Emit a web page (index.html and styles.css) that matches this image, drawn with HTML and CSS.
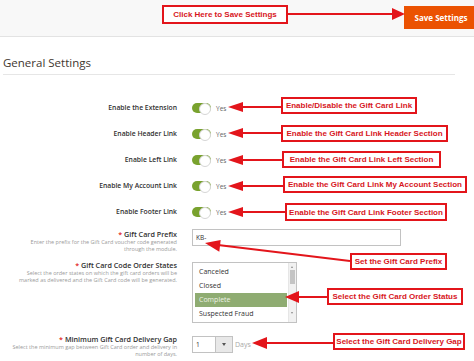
FILE: index.html
```html
<!DOCTYPE html>
<html lang="en">
<head>
    <meta charset="UTF-8">
    <meta name="viewport" content="width=device-width, initial-scale=1.0">
    <title>Gift Card Configuration</title>
    <link rel="stylesheet" href="styles.css">
</head>
<body>
    <header class="page_actions">
        <button class="save_btn">Save Settings</button>
    </header>

    <main class="config">
        <h2 class="section_title">General Settings</h2>

        <div class="field_list">
            <div class="field field_toggle">
                <div class="field_label">Enable the Extension</div>
                <div class="field_control"><span class="toggle"></span><span class="toggle_text">Yes</span></div>
            </div>
            <div class="field field_toggle">
                <div class="field_label">Enable Header Link</div>
                <div class="field_control"><span class="toggle"></span><span class="toggle_text">Yes</span></div>
            </div>
            <div class="field field_toggle">
                <div class="field_label">Enable Left Link</div>
                <div class="field_control"><span class="toggle"></span><span class="toggle_text">Yes</span></div>
            </div>
            <div class="field field_toggle">
                <div class="field_label">Enable My Account Link</div>
                <div class="field_control"><span class="toggle"></span><span class="toggle_text">Yes</span></div>
            </div>
            <div class="field field_toggle">
                <div class="field_label">Enable Footer Link</div>
                <div class="field_control"><span class="toggle"></span><span class="toggle_text">Yes</span></div>
            </div>

            <!-- Text / select fields -->
            <div class="field field_prefix">
                <div class="field_label">
                    <span class="required">*</span> Gift Card Prefix
                    <p class="field_note">Enter the prefix for the Gift Card voucher code generated<br>through the module.</p>
                </div>
                <div class="field_control">
                    <input type="text" class="text_input" value="KB-">
                </div>
            </div>

            <div class="field field_states">
                <div class="field_label">
                    <span class="required">*</span> Gift Card Code Order States
                    <p class="field_note">Select the order states on which the gift card orders will be<br>marked as delivered and the Gift Card code will be generated.</p>
                </div>
                <div class="field_control">
                    <div class="listbox">
                        <div class="listbox_options">
                            <div class="listbox_option">Canceled</div>
                            <div class="listbox_option">Closed</div>
                            <div class="listbox_option selected">Complete</div>
                            <div class="listbox_option">Suspected Fraud</div>
                        </div>
                        <div class="listbox_scroll">
                            <span class="scroll_up"></span>
                            <span class="scroll_thumb"></span>
                            <span class="scroll_down"></span>
                        </div>
                    </div>
                </div>
            </div>

            <div class="field field_gap">
                <div class="field_label">
                    <span class="required">*</span> Minimum Gift Card Delivery Gap
                    <p class="field_note">Select the minimum gap between Gift Card order and delivery in<br>number of days.</p>
                </div>
                <div class="field_control">
                    <div class="gap_select">
                        <span class="gap_value">1</span>
                        <span class="gap_arrow"></span>
                    </div>
                    <span class="gap_unit">Days</span>
                </div>
            </div>
        </div>
    </main>

    <!-- Screenshot annotations drawn over the form -->
    <div class="notes">
        <svg class="notes_arrows" width="474" height="361" viewBox="0 0 474 361">
            <g fill="#e3151b" stroke="#e3151b" stroke-width="2">
                <line x1="287" y1="14" x2="393" y2="14"/>
                <polygon stroke="none" points="392,8 405,14 392,20"/>

                <line x1="242" y1="107" x2="282" y2="107"/>
                <polygon stroke="none" points="243,102 228,107 243,112"/>
                <line x1="242" y1="133" x2="282" y2="133"/>
                <polygon stroke="none" points="243,128 228,133 243,138"/>
                <line x1="242" y1="160" x2="283" y2="160"/>
                <polygon stroke="none" points="243,155 228,160 243,165"/>
                <line x1="242" y1="186" x2="284" y2="186"/>
                <polygon stroke="none" points="243,181 228,186 243,191"/>
                <line x1="242" y1="212" x2="285" y2="212"/>
                <polygon stroke="none" points="243,207 228,212 243,217"/>

                <line x1="218" y1="245" x2="350" y2="261"/>
                <polygon stroke="none" points="205,243 220.7,239.9 219.3,251.8"/>

                <line x1="298" y1="297" x2="327" y2="297"/>
                <polygon stroke="none" points="299,291 285,297 299,303"/>

                <line x1="266" y1="343" x2="334" y2="343"/>
                <polygon stroke="none" points="267,337 252,343 267,349"/>
            </g>
        </svg>
        <div class="note_box note_save">Click Here to Save Settings</div>
        <div class="note_box note_ext">Enable/Disable the Gift Card Link</div>
        <div class="note_box note_header">Enable the Gift Card Link Header Section</div>
        <div class="note_box note_left">Enable the Gift Card Link Left Section</div>
        <div class="note_box note_account">Enable the Gift Card Link My Account Section</div>
        <div class="note_box note_footer">Enable the Gift Card Link Footer Section</div>
        <div class="note_box note_prefix">Set the Gift Card Prefix</div>
        <div class="note_box note_status">Select the Gift Card Order Status</div>
        <div class="note_box note_gap">Select the Gift Card Delivery Gap</div>
    </div>
</body>
</html>
```

FILE: styles.css
```css
* {
    margin: 0;
    padding: 0;
    box-sizing: border-box;
}

body {
    position: relative;
    width: 474px;
    height: 361px;
    overflow: hidden;
    background: #fff;
    font-family: "Open Sans", sans-serif;
    color: #303030;
}

/* Top action bar */
.page_actions {
    height: 37px;
    background: #f8f8f8;
    border-bottom: 1px solid #e3e3e3;
    display: flex;
    justify-content: flex-end;
    align-items: flex-start;
    padding-top: 6px;
}

.save_btn {
    width: 70px;
    height: 23px;
    border: none;
    background: #eb5202;
    color: #fff;
    font-family: "Open Sans", sans-serif;
    font-size: 8px;
    font-weight: 700;
    padding-left: 4px;
}

/* Section */
.config {
    padding: 0 19px 0 3px;
}

.section_title {
    margin-top: 18px;
    font-size: 11.5px;
    line-height: 15px;
    font-weight: 400;
    color: #41362f;
    padding-bottom: 4px;
    border-bottom: 1px solid #e6e6e6;
}

.field_list {
    margin-top: 20px;
    margin-left: -3px;
}

.field {
    display: grid;
    grid-template-columns: 177px 1fr;
    column-gap: 15px;
    align-items: start;
}

.field_toggle {
    height: 26px;
    align-items: center;
}

.field_label {
    text-align: right;
    font-size: 7.2px;
    font-weight: 600;
    line-height: 10px;
}

.field_toggle .field_label {
    font-size: 6.8px;
}

.required {
    color: #e22626;
}

.field_note {
    font-size: 5.5px;
    line-height: 7px;
    font-weight: 400;
    color: #9a9a9a;
}

.field_control {
    display: flex;
    align-items: center;
}

/* Toggle switch */
.toggle {
    position: relative;
    width: 19px;
    height: 10px;
    border-radius: 5px;
    background: #79a22e;
}

.toggle::after {
    content: "";
    position: absolute;
    right: 0;
    top: 0;
    width: 10px;
    height: 10px;
    border-radius: 50%;
    background: #fff;
    border: 1px solid #d6d6d6;
}

.toggle_text {
    margin-left: 5px;
    font-size: 6.5px;
    color: #666;
}

/* Text input */
.field_prefix {
    margin-top: 4px;
}

.text_input {
    width: 209px;
    height: 17px;
    border: 1px solid #c2c2c2;
    padding: 0 3px;
    font-family: "Open Sans", sans-serif;
    font-size: 6.5px;
    color: #303030;
    outline: none;
}

/* Multi select list */
.field_states {
    margin-top: 7px;
}

.field_states .field_control {
    padding-top: 2px;
}

.listbox {
    width: 105px;
    height: 61px;
    border: 1px solid #c2c2c2;
    display: flex;
}

.listbox_options {
    flex: 1;
    padding: 2px 1px 0 2px;
}

.listbox_option {
    height: 14px;
    line-height: 14px;
    padding-left: 4px;
    font-size: 7px;
    color: #333;
}

.listbox_option.selected {
    background: #8fac72;
    color: #eef3e8;
}

.listbox_scroll {
    position: relative;
    width: 8px;
    background: #f1f1f1;
    border-left: 1px solid #e6e6e6;
}

.scroll_up,
.scroll_down {
    position: absolute;
    left: 2px;
    width: 0;
    height: 0;
    border-left: 1.5px solid transparent;
    border-right: 1.5px solid transparent;
}

.scroll_up {
    top: 3px;
    border-bottom: 2px solid #8a8a8a;
}

.scroll_down {
    bottom: 8px;
    border-top: 2px solid #8a8a8a;
}

.scroll_thumb {
    position: absolute;
    left: 1px;
    top: 7px;
    width: 5px;
    height: 14px;
    background: #c4c4c4;
}

/* Delivery gap select */
.field_gap {
    margin-top: 11px;
}

.field_gap .field_control {
    padding-top: 2px;
}

.gap_select {
    display: flex;
    width: 41px;
    height: 17px;
    border: 1px solid #c2c2c2;
}

.gap_value {
    flex: 1;
    padding-left: 3px;
    font-size: 6.5px;
    line-height: 15px;
    color: #303030;
}

.gap_arrow {
    position: relative;
    width: 17px;
    background: #e8e8e8;
    border-left: 1px solid #c2c2c2;
}

.gap_arrow::after {
    content: "";
    position: absolute;
    left: 6px;
    top: 6px;
    border-left: 2px solid transparent;
    border-right: 2px solid transparent;
    border-top: 3px solid #555;
}

.gap_unit {
    margin-left: 2px;
    font-size: 7px;
    color: #a8a8a8;
}

/* Annotations */
.notes {
    position: absolute;
    left: 0;
    top: 0;
    width: 474px;
    height: 361px;
    pointer-events: none;
}

.notes_arrows {
    position: absolute;
    left: 0;
    top: 0;
}

.note_box {
    position: absolute;
    display: flex;
    align-items: center;
    justify-content: center;
    background: #fff;
    border: 2px solid #e3151b;
    color: #d7161d;
    font-family: "Liberation Sans", Arial, sans-serif;
    font-size: 8px;
    font-weight: 700;
    white-space: nowrap;
}

.note_save { left: 162px; top: 5px; width: 126px; height: 19px; }
.note_ext { left: 281px; top: 97px; width: 136px; height: 17px; }
.note_header { left: 281px; top: 125px; width: 167px; height: 17px; }
.note_left { left: 282px; top: 151px; width: 159px; height: 17px; }
.note_account { left: 283px; top: 176px; width: 184px; height: 17px; }
.note_footer { left: 285px; top: 203px; width: 162px; height: 18px; }
.note_prefix { left: 350px; top: 253px; width: 97px; height: 17px; }
.note_status { left: 327px; top: 288px; width: 136px; height: 17px; }
.note_gap { left: 333px; top: 333px; width: 132px; height: 17px; }
```
